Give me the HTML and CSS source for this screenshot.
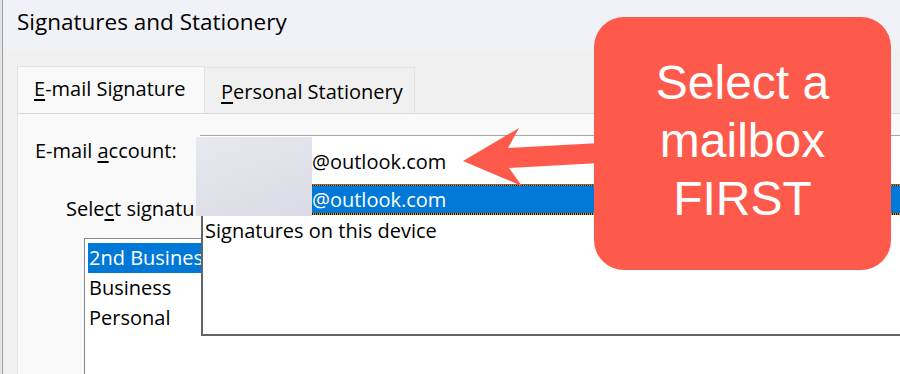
FILE: index.html
```html
<!DOCTYPE html>
<html lang="en">
<head>
<meta charset="utf-8">
<title>Signatures and Stationery</title>
<link rel="stylesheet" href="styles.css">
</head>
<body>
<div class="window">
  <div class="edge"></div>
  <div class="main">
    <div class="titlebar">Signatures and Stationery</div>
    <div class="dialog">
      <div class="tabs">
        <div class="tab active"><u>E</u>-mail Signature</div>
        <div class="tab"><u>P</u>ersonal Stationery</div>
      </div>
      <div class="panel">
        <div class="row account-row">
          <div class="label account-label">E-mail <u>a</u>ccount:</div>
          <div class="combo">
            <div class="combo-value">@outlook.com</div>
            <div class="dropdown">
              <div class="option selected">@outlook.com</div>
              <div class="option device">Signatures on this device</div>
            </div>
            <div class="blur"></div>
          </div>
        </div>
        <div class="label select-label">Sele<u>c</u>t signature to edit</div>
        <div class="listbox">
          <div class="item highlighted">2nd Business</div>
          <div class="item">Business</div>
          <div class="item">Personal</div>
        </div>
      </div>
    </div>
  </div>
</div>
<svg class="arrow" width="900" height="374" viewBox="0 0 900 374" aria-hidden="true">
  <polygon points="463,161 519,128 508,148 600,143 600,163 509,168 522,186" fill="#fe5a4c"/>
</svg>
<div class="callout">Select a<br>mailbox<br>FIRST</div>
</body>
</html>
```

FILE: styles.css
```css
html, body {
  margin: 0;
  padding: 0;
}
body {
  width: 900px;
  height: 374px;
  overflow: hidden;
  position: relative;
  font-family: "Open Sans", "Noto Sans", sans-serif;
  color: #000;
  background: #f0f0f0;
}
u {
  text-decoration-thickness: 2px;
  text-underline-offset: 3px;
}
.window {
  display: flex;
  height: 374px;
  overflow: hidden;
}
.edge {
  width: 2px;
  flex: none;
  background: #e4e4e4;
  border-right: 1px solid #9e9e9e;
}
.main {
  flex: 1;
  display: flex;
  flex-direction: column;
  min-width: 0;
  min-height: 0;
}
.titlebar {
  height: 50px;
  flex: none;
  background: #f1f2f7;
  box-sizing: border-box;
  padding: 7px 0 0 14px;
  font-size: 22.5px;
  line-height: 30px;
}
.dialog {
  flex: 1;
  min-height: 0;
  background: #f0f0f0;
  padding: 16px 0 0 14px;
  display: flex;
  flex-direction: column;
}
.tabs {
  display: flex;
  align-items: flex-end;
  height: 47px;
  flex: none;
}
.tab {
  box-sizing: border-box;
  height: 46px;
  padding: 11px 0 0 16px;
  font-size: 20px;
  line-height: 26px;
  white-space: nowrap;
  background: #f0f0f0;
  border: 1px solid #e2e2e2;
  border-left: none;
  border-bottom: none;
  width: 210px;
}
.tab.active {
  height: 47px;
  width: 188px;
  background: #f9f9f9;
  border-left: 1px solid #e2e2e2;
  padding-top: 9px;
}
.panel {
  flex: 1;
  min-height: 0;
  display: flex;
  flex-direction: column;
  background: #f9f9f9;
  border-top: 1px solid #d9d9d9;
  border-left: 1px solid #e6e6e6;
}
.row {
  display: flex;
  flex: none;
}
.account-row {
  margin-top: 21px;
  height: 49px;
}
.label {
  font-size: 20px;
  line-height: 26px;
  white-space: nowrap;
}
.account-label {
  box-sizing: border-box;
  width: 182px;
  padding: 3px 0 0 17px;
  flex: none;
}
.combo {
  position: relative;
  flex: 1;
  background: #fff;
  border-top: 1px solid #a8a8a8;
}
.combo-value {
  padding: 13px 0 0 112px;
  font-size: 20px;
  line-height: 26px;
}
.dropdown {
  position: absolute;
  left: 1px;
  right: -20px;
  top: 48px;
  height: 150px;
  background: #fff;
  border-left: 2px solid #646464;
  border-bottom: 2px solid #646464;
  z-index: 2;
}
.option {
  font-size: 20px;
  height: 31px;
  box-sizing: border-box;
  white-space: nowrap;
}
.option.selected {
  position: relative;
  background: #0078d7;
  color: #fff;
  padding-left: 109px;
  line-height: 31px;
}
.option.selected::before,
.option.selected::after {
  content: "";
  position: absolute;
  left: 109px;
  right: 0;
  height: 2px;
  background: repeating-linear-gradient(90deg, #1a1a1a 0 1px, #e8860f 1px 2px);
}
.option.selected::before {
  top: 0;
  border-top: 1px solid #6a6a6a;
  height: 1px;
}
.option.selected::after {
  bottom: 0;
}
.option.device {
  padding-left: 2px;
  line-height: 32px;
  height: 32px;
}
.blur {
  position: absolute;
  left: -4px;
  top: 1px;
  width: 116px;
  height: 79px;
  background: linear-gradient(160deg, #e8e9ef 0%, #dfe0e8 60%, #d9dae4 100%);
  z-index: 3;
}
.select-label {
  flex: none;
  margin: 12px 0 0 48px;
}
.listbox {
  flex: 1;
  min-height: 0;
  margin: 16px 0 0 66px;
  background: #fff;
  border: 1px solid #828790;
  border-bottom: none;
  border-right: none;
  padding: 4px 0 0 3px;
}
.item {
  font-size: 20px;
  line-height: 30px;
  height: 30px;
  padding-left: 1px;
  width: 150px;
  white-space: nowrap;
}
.item.highlighted {
  background: #0078d7;
  color: #fff;
}
.arrow {
  position: absolute;
  left: 0;
  top: 0;
  z-index: 5;
  pointer-events: none;
}
.callout {
  position: absolute;
  left: 594px;
  top: 17px;
  width: 297px;
  height: 253px;
  box-sizing: border-box;
  padding-top: 37px;
  border-radius: 30px;
  background: #fe5a4c;
  color: #fff;
  font-family: "Liberation Sans", Arial, sans-serif;
  font-size: 48px;
  line-height: 58px;
  text-align: center;
  z-index: 6;
}
```
